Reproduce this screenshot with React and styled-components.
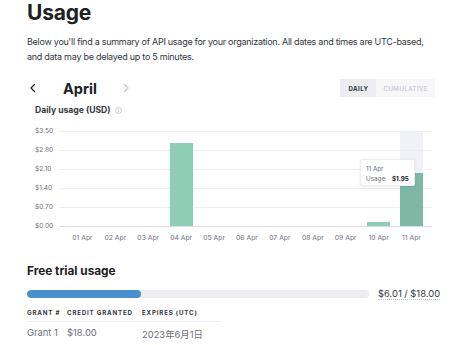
import React from "react";
import styled, { createGlobalStyle } from "styled-components";

const GlobalStyle = createGlobalStyle`
  body {
    margin: 0;
    background: #fff;
    font-family: Inter, "Noto Sans", "Noto Sans CJK SC", sans-serif;
    color: #202123;
  }
`;

const days = [
  { label: "01 Apr", value: 0 },
  { label: "02 Apr", value: 0 },
  { label: "03 Apr", value: 0 },
  { label: "04 Apr", value: 3.05 },
  { label: "05 Apr", value: 0 },
  { label: "06 Apr", value: 0 },
  { label: "07 Apr", value: 0 },
  { label: "08 Apr", value: 0 },
  { label: "09 Apr", value: 0 },
  { label: "10 Apr", value: 0.13 },
  { label: "11 Apr", value: 1.95, active: true },
];

const ticks = ["$3.50", "$2.80", "$2.10", "$1.40", "$0.70", "$0.00"];
const MAX = 3.5;
const PLOT_H = 95;

const Page = styled.div`
  padding: 0 0 0 27px;
  width: 440px;
`;

const Title = styled.h1`
  margin: 0;
  font-size: 21px;
  line-height: 26px;
  font-weight: 700;
  letter-spacing: -0.2px;
`;

const Intro = styled.p`
  margin: 8px 0 0;
  font-size: 9px;
  line-height: 15px;
  letter-spacing: -0.27px;
  color: #353740;
  width: 402px;
`;

const NavRow = styled.div`
  display: flex;
  align-items: center;
  justify-content: space-between;
  margin-top: 15px;
  height: 18px;
  width: 410px;
`;

const MonthNav = styled.div`
  display: flex;
  align-items: center;
`;

const Arrow = styled.span`
  display: flex;
  width: 8px;
  margin-left: ${(p) => p.$ml}px;
  color: ${(p) => (p.$muted ? "#c5c5d2" : "#202123")};
`;

const Month = styled.span`
  font-size: 14.5px;
  font-weight: 700;
  margin-left: 26px;
  width: 30px;
`;

const Toggle = styled.div`
  display: flex;
  background: #f7f7f8;
  height: 18px;
  margin-right: 2px;
`;

const ToggleBtn = styled.span`
  display: flex;
  align-items: center;
  padding: 0 ${(p) => p.$pad}px;
  font-size: 6.2px;
  font-weight: ${(p) => (p.$active ? 700 : 500)};
  letter-spacing: 0.4px;
  background: ${(p) => (p.$active ? "#ececf1" : "transparent")};
  color: ${(p) => (p.$active ? "#353740" : "#c5c5d2")};
`;

const ChartBox = styled.div`
  padding-left: 8px;
  margin-top: 7px;
`;

const ChartTitle = styled.div`
  display: flex;
  align-items: center;
  gap: 4px;
  font-size: 8.6px;
  font-weight: 700;
  color: #353740;
  height: 12px;
`;

const ChartBody = styled.div`
  display: flex;
  margin-top: 15px;
`;

const YAxis = styled.div`
  display: flex;
  flex-direction: column;
  justify-content: space-between;
  height: ${PLOT_H + 8}px;
  margin-top: -4px;
  width: 25px;
  font-size: 6.6px;
  line-height: 8px;
  color: #6e6e80;
`;

const PlotCol = styled.div`
  display: flex;
  flex-direction: column;
`;

const Plot = styled.div`
  position: relative;
  width: 372px;
  height: ${PLOT_H}px;
`;

const Grid = styled.div`
  display: flex;
  flex-direction: column;
  height: 100%;
  border-bottom: 1px solid #d9d9e3;
`;

const GridLine = styled.div`
  flex: 1;
  border-top: 1px solid #ececf1;
`;

const Columns = styled.div`
  position: absolute;
  inset: 0 4px 0 6px;
  display: flex;
`;

const Column = styled.div`
  flex: 1;
  display: flex;
  justify-content: center;
  align-items: flex-end;
`;

const BarSlot = styled.div`
  width: 23px;
  height: 100%;
  display: flex;
  align-items: flex-end;
  background: ${(p) => (p.$active ? "rgba(236,236,246,0.75)" : "transparent")};
`;

const Bar = styled.div`
  width: 100%;
  background: ${(p) => (p.$active ? "#7db8a5" : "#90cdb7")};
`;

const XAxis = styled.div`
  display: flex;
  padding: 0 4px 0 6px;
  margin-top: 7px;
`;

const XLabel = styled.span`
  flex: 1;
  text-align: center;
  font-size: 6.8px;
  color: #6e6e80;
`;

const Tooltip = styled.div`
  position: absolute;
  left: 300px;
  top: 28px;
  height: 27px;
  box-sizing: border-box;
  padding: 4px 5px 0 5px;
  background: #fff;
  border: 1px solid #ececf1;
  border-radius: 2px;
  box-shadow: 0 1px 3px rgba(0, 0, 0, 0.08);
  font-size: 6.3px;
  line-height: 10px;
  white-space: nowrap;
  color: #6e6e80;
`;

const TipValue = styled.b`
  color: #202123;
  margin-left: 5px;
`;

const Section = styled.h2`
  margin: 22px 0 0;
  font-size: 11.8px;
  line-height: 15px;
  font-weight: 700;
`;

const ProgressRow = styled.div`
  display: flex;
  align-items: center;
  margin-top: 9px;
`;

const Track = styled.div`
  width: 342px;
  height: 8px;
  border-radius: 4px;
  background: #ececf1;
  overflow: hidden;
`;

const Fill = styled.div`
  height: 100%;
  border-radius: 4px;
  background: #4a8fd0;
`;

const Amount = styled.span`
  margin-left: 9px;
  font-size: 9.4px;
  white-space: nowrap;
  color: #353740;
  border-bottom: 1px dotted #c5c5d2;
`;

const Table = styled.div`
  display: grid;
  grid-template-columns: 40px 75px 80px;
  width: 200px;
  margin-top: 5px;
`;

const Th = styled.div`
  font-size: 6.2px;
  font-weight: 700;
  letter-spacing: 0.8px;
  white-space: nowrap;
  color: #353740;
  padding: 4px 0 5px;
  border-bottom: 1px solid #ececf1;
`;

const Td = styled.div`
  font-size: 9.4px;
  color: #6e6e80;
  padding-top: 5px;
`;

function Chevron({ dir }) {
  return (
    <svg width="8" height="10" viewBox="0 0 8 10" fill="none">
      <path
        d={dir === "left" ? "M5.5 1.5 2 5l3.5 3.5" : "M2.5 1.5 6 5 2.5 8.5"}
        stroke="currentColor"
        strokeWidth="1.3"
        strokeLinecap="round"
        strokeLinejoin="round"
      />
    </svg>
  );
}

function InfoIcon() {
  return (
    <svg width="7" height="7" viewBox="0 0 10 10" fill="none">
      <circle cx="5" cy="5" r="4.2" stroke="#acacbe" strokeWidth="0.9" />
      <path d="M5 4.4v2.6M5 3v.1" stroke="#acacbe" strokeWidth="0.9" strokeLinecap="round" />
    </svg>
  );
}

export default function App() {
  return (
    <>
      <GlobalStyle />
      <Page>
        <Title>Usage</Title>
        <Intro>
          Below you'll find a summary of API usage for your organization. All dates and times are UTC-based,
          and data may be delayed up to 5 minutes.
        </Intro>

        <NavRow>
          <MonthNav>
            <Arrow $ml={2}>
              <Chevron dir="left" />
            </Arrow>
            <Month>April</Month>
            <Arrow $ml={29} $muted>
              <Chevron dir="right" />
            </Arrow>
          </MonthNav>
          <Toggle>
            <ToggleBtn $active $pad={8}>DAILY</ToggleBtn>
            <ToggleBtn $pad={7}>CUMULATIVE</ToggleBtn>
          </Toggle>
        </NavRow>

        <ChartBox>
          <ChartTitle>
            Daily usage (USD) <InfoIcon />
          </ChartTitle>
          <ChartBody>
            <YAxis>
              {ticks.map((t) => (
                <span key={t}>{t}</span>
              ))}
            </YAxis>
            <PlotCol>
              <Plot>
                <Grid>
                  {ticks.slice(1).map((t) => (
                    <GridLine key={t} />
                  ))}
                </Grid>
                <Columns>
                  {days.map((d) => (
                    <Column key={d.label}>
                      <BarSlot $active={d.active}>
                        <Bar $active={d.active} style={{ height: `${(d.value / MAX) * PLOT_H}px` }} />
                      </BarSlot>
                    </Column>
                  ))}
                </Columns>
                <Tooltip>
                  <div>11 Apr</div>
                  <div>
                    Usage:<TipValue>$1.95</TipValue>
                  </div>
                </Tooltip>
              </Plot>
              <XAxis>
                {days.map((d) => (
                  <XLabel key={d.label}>{d.label}</XLabel>
                ))}
              </XAxis>
            </PlotCol>
          </ChartBody>
        </ChartBox>

        <Section>Free trial usage</Section>
        <ProgressRow>
          <Track>
            <Fill style={{ width: `${(6.01 / 18) * 100}%` }} />
          </Track>
          <Amount>$6.01 / $18.00</Amount>
        </ProgressRow>
        <Table>
          <Th>GRANT #</Th>
          <Th>CREDIT GRANTED</Th>
          <Th>EXPIRES (UTC)</Th>
          <Td>Grant 1</Td>
          <Td>$18.00</Td>
          <Td>2023年6月1日</Td>
        </Table>
      </Page>
    </>
  );
}
